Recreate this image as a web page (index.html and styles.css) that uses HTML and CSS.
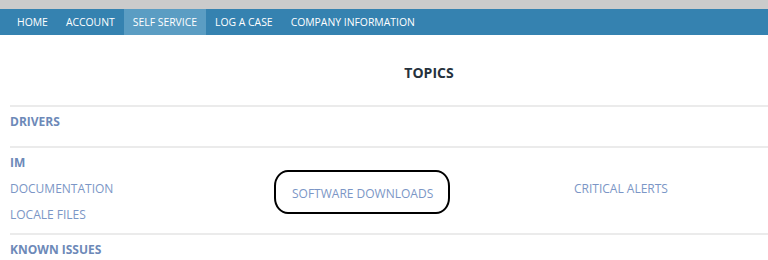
FILE: index.html
```html
<!DOCTYPE html>
<html lang="en">
<head>
    <meta charset="UTF-8">
    <meta name="viewport" content="width=device-width, initial-scale=1.0">
    <title>Topics</title>
    <link rel="stylesheet" href="styles.css">
</head>
<body>

<div class="topbar"></div>
<nav class="nav">
    <a class="nav-item" href="#">HOME</a>
    <a class="nav-item" href="#">ACCOUNT</a>
    <a class="nav-item active" href="#">SELF SERVICE</a>
    <a class="nav-item" href="#">LOG A CASE</a>
    <a class="nav-item" href="#">COMPANY INFORMATION</a>
</nav>

<div class="content">
    <h1 class="title">TOPICS</h1>

    <div class="section empty">
        <h2 class="section-title">DRIVERS</h2>
    </div>

    <div class="section">
        <h2 class="section-title">IM</h2>
        <div class="links">
            <div class="col">
                <a class="link" href="#">DOCUMENTATION</a>
                <a class="link" href="#">LOCALE FILES</a>
            </div>
            <div class="col">
                <a class="link marked" href="#">SOFTWARE DOWNLOADS</a>
            </div>
            <div class="col">
                <a class="link" href="#">CRITICAL ALERTS</a>
            </div>
        </div>
    </div>

    <div class="section">
        <h2 class="section-title">KNOWN ISSUES</h2>
    </div>
</div>

</body>
</html>
```

FILE: styles.css
```css
body {
    margin: 0;
    font-family: "Open Sans", "Liberation Sans", sans-serif;
    font-size: 12px;
    background-color: #fff;
    overflow: hidden;
}
.topbar {
    height: 9px;
    background-color: #cbcbcb;
}
.nav {
    display: flex;
    height: 26px;
    padding-left: 8px;
    background-color: #3582b0;
}
.nav-item {
    display: flex;
    align-items: center;
    padding: 0 9px;
    color: #fff;
    font-size: 10.4px;
    text-decoration: none;
}
.nav-item.active {
    background-color: #5b9dc3;
}
.content {
    margin-left: 10px;
}
.title {
    margin: 0;
    padding: 28px 0 0 80px;
    height: 42px;
    text-align: center;
    font-size: 14px;
    font-weight: bold;
    color: #26323d;
}
.section {
    border-top: 2px solid #ebebeb;
    padding: 6px 0 5px;
}
.section.empty {
    padding-bottom: 11px;
}
.section-title {
    margin: 0 0 4px;
    line-height: 18px;
    font-size: 12px;
    font-weight: bold;
    color: #6d89b8;
}
.links {
    display: grid;
    grid-template-columns: 282px 282px 1fr;
}
.col {
    display: flex;
    flex-direction: column;
}
.link {
    line-height: 26px;
    color: #7b96c6;
    text-decoration: none;
}
.marked {
    position: relative;
    align-self: flex-start;
    margin-top: 5px;
}
.marked::after {
    content: "";
    position: absolute;
    left: -18px;
    right: -17px;
    top: -11px;
    bottom: -7px;
    border: 2.5px solid #000;
    border-radius: 14px / 16px;
}
```
